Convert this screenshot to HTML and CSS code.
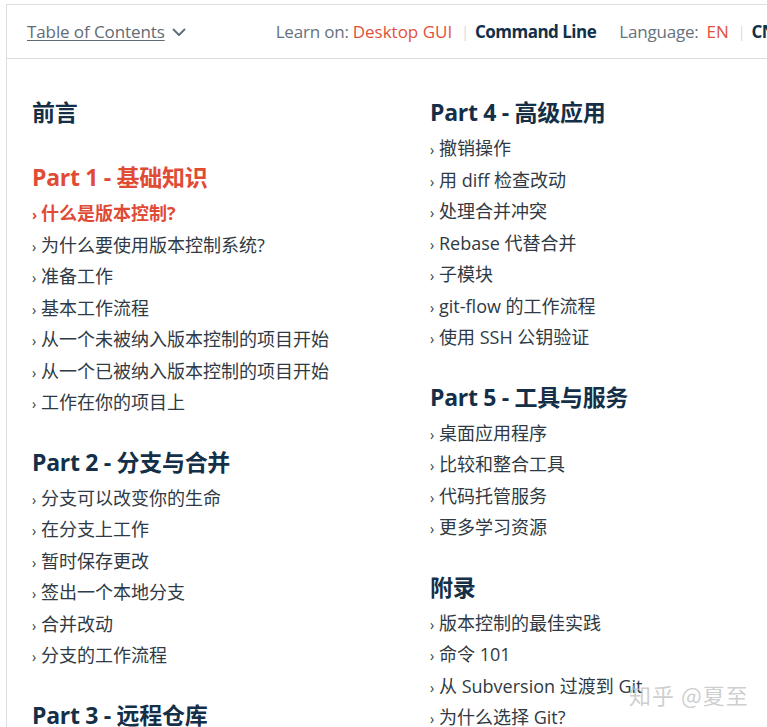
FILE: index.html
```html
<!DOCTYPE html>
<html lang="zh-CN">
<head>
<meta charset="utf-8">
<title>Table of Contents</title>
<link rel="stylesheet" href="styles.css">
</head>
<body>
<div class="toc-box">
  <header class="toc-head">
    <a class="toc-toggle" href="#">Table of Contents</a>
    <svg class="chev" width="14" height="9" viewBox="0 0 14 9"><path d="M1.5 1.5 L7 7 L12.5 1.5" fill="none" stroke="#5f6b75" stroke-width="1.8" stroke-linecap="round" stroke-linejoin="round"/></svg>
    <div class="switch learn">
      <span class="lbl">Learn on:</span>
      <a class="opt red" href="#">Desktop GUI</a>
      <span class="sep">|</span>
      <a class="opt bold" href="#">Command Line</a>
    </div>
    <div class="switch lang">
      <span class="lbl">Language:</span>
      <a class="opt red" href="#">EN</a>
      <span class="sep">|</span>
      <a class="opt bold" href="#">CN</a>
    </div>
  </header>
  <div class="toc-body">
    <div class="col">
      <section class="sec sec-pre"><h2>前言</h2></section>
      <section class="sec">
        <h2 class="active">Part 1 - 基础知识</h2>
        <ul>
          <li class="cur">什么是版本控制?</li>
          <li>为什么要使用版本控制系统?</li>
          <li>准备工作</li>
          <li>基本工作流程</li>
          <li>从一个未被纳入版本控制的项目开始</li>
          <li>从一个已被纳入版本控制的项目开始</li>
          <li>工作在你的项目上</li>
        </ul>
      </section>
      <section class="sec">
        <h2>Part 2 - 分支与合并</h2>
        <ul>
          <li>分支可以改变你的生命</li>
          <li>在分支上工作</li>
          <li>暂时保存更改</li>
          <li>签出一个本地分支</li>
          <li>合并改动</li>
          <li>分支的工作流程</li>
        </ul>
      </section>
      <section class="sec">
        <h2>Part 3 - 远程仓库</h2>
      </section>
    </div>
    <div class="col">
      <section class="sec">
        <h2>Part 4 - 高级应用</h2>
        <ul>
          <li>撤销操作</li>
          <li>用 diff 检查改动</li>
          <li>处理合并冲突</li>
          <li>Rebase 代替合并</li>
          <li>子模块</li>
          <li>git-flow 的工作流程</li>
          <li>使用 SSH 公钥验证</li>
        </ul>
      </section>
      <section class="sec">
        <h2>Part 5 - 工具与服务</h2>
        <ul>
          <li>桌面应用程序</li>
          <li>比较和整合工具</li>
          <li>代码托管服务</li>
          <li>更多学习资源</li>
        </ul>
      </section>
      <section class="sec">
        <h2>附录</h2>
        <ul>
          <li>版本控制的最佳实践</li>
          <li>命令 101</li>
          <li>从 Subversion 过渡到 Git</li>
          <li>为什么选择 Git?</li>
        </ul>
      </section>
    </div>
  </div>
</div>
<div class="watermark">知乎 @夏至</div>
</body>
</html>
```
FILE: styles.css
```css
html, body {
  margin: 0;
  padding: 0;
  overflow: hidden;
  background: #fff;
}
body {
  font-family: "Open Sans", "Noto Sans CJK SC", sans-serif;
  color: #2f3a44;
  width: 767px;
  height: 727px;
  position: relative;
}
.toc-box {
  margin: 4px 0 0 6px;
  width: 820px;
  border: 1px solid #dcdfe2;
  border-right: none;
  box-sizing: border-box;
}
.toc-head {
  height: 53px;
  border-bottom: 1px solid #dcdfe2;
  display: flex;
  align-items: center;
  padding-left: 20px;
  font-size: 17px;
  white-space: nowrap;
}
.toc-toggle {
  color: #5f6b75;
  text-decoration: underline;
  text-underline-offset: 2px;
  text-decoration-thickness: 1px;
  letter-spacing: -0.1px;
}
.chev {
  margin-left: 7px;
  margin-top: 2px;
}
.switch {
  display: flex;
  align-items: center;
}
.learn { margin-left: 90px; }
.lang { margin-left: 23px; }
.lbl { color: #66727c; letter-spacing: -0.2px; }
.opt { text-decoration: none; }
.red { color: #e0513c; margin-left: 4px; letter-spacing: 0; }
.lang .red { margin-left: 8px; }
.bold { color: #12304a; font-weight: 700; letter-spacing: -0.5px; }
.sep {
  color: #d6d9dc;
  margin: 0 6px 0 9px;
  font-size: 14px;
}
.toc-body {
  display: grid;
  grid-template-columns: 398px 360px;
  padding: 37px 0 0 25px;
}
.sec {
  margin-bottom: 27px;
}
.sec-pre { margin-bottom: 33px; }
h2 {
  margin: 0 0 5px;
  font-size: 23px;
  line-height: 32px;
  height: 32px;
  font-weight: 700;
  color: #142f47;
  letter-spacing: -0.3px;
}
h2.active { color: #e04b36; }
ul {
  list-style: none;
  margin: 0;
  padding: 0;
}
li {
  font-size: 18px;
  line-height: 31.5px;
  height: 31.5px;
  color: #2f3a44;
  white-space: nowrap;
}
li::before {
  content: "›";
  display: inline-block;
  width: 9px;
  font-size: 14px;
  line-height: 1;
  color: #2f3a44;
}
li.cur {
  color: #e04b36;
  font-weight: 700;
}
li.cur::before { color: #e04b36; }
.watermark {
  position: absolute;
  left: 629px;
  top: 678px;
  font-size: 22px;
  color: rgba(190, 190, 190, 0.75);
  font-family: "Noto Sans CJK SC", sans-serif;
  letter-spacing: 1px;
}
```
